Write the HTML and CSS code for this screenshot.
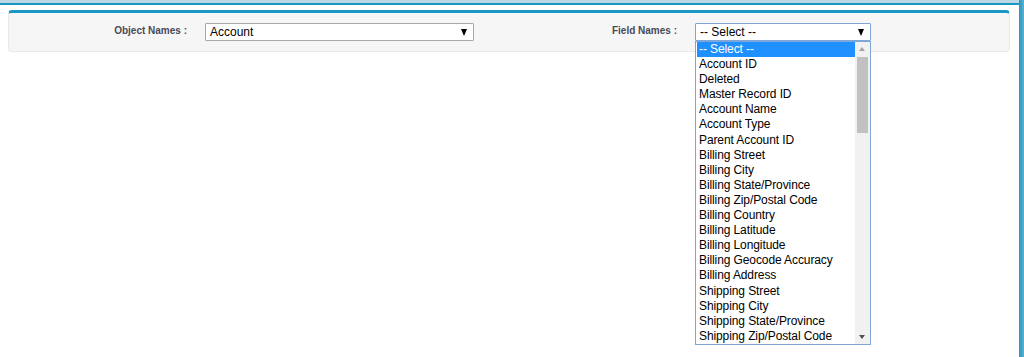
FILE: index.html
```html
<!DOCTYPE html>
<html>
<head>
<meta charset="utf-8">
<link rel="stylesheet" href="styles.css">
</head>
<body>
<div class="page">
  <div class="main">
    <div class="topstrip"></div>
    <div class="panel">
      <div class="row">
        <div class="label label-obj">Object Names :</div>
        <div class="select select-obj">
          <span class="sel-text">Account</span>
          <span class="arrow"></span>
        </div>
        <div class="label label-field">Field Names :</div>
        <div class="select select-field">
          <span class="sel-text">-- Select --</span>
          <span class="arrow"></span>
          <div class="dropdown">
            <ul class="options">
              <li class="opt active">-- Select --</li>
              <li class="opt">Account ID</li>
              <li class="opt">Deleted</li>
              <li class="opt">Master Record ID</li>
              <li class="opt">Account Name</li>
              <li class="opt">Account Type</li>
              <li class="opt">Parent Account ID</li>
              <li class="opt">Billing Street</li>
              <li class="opt">Billing City</li>
              <li class="opt">Billing State/Province</li>
              <li class="opt">Billing Zip/Postal Code</li>
              <li class="opt">Billing Country</li>
              <li class="opt">Billing Latitude</li>
              <li class="opt">Billing Longitude</li>
              <li class="opt">Billing Geocode Accuracy</li>
              <li class="opt">Billing Address</li>
              <li class="opt">Shipping Street</li>
              <li class="opt">Shipping City</li>
              <li class="opt">Shipping State/Province</li>
              <li class="opt">Shipping Zip/Postal Code</li>
            </ul>
            <div class="scrollbar">
              <div class="sb-up"></div>
              <div class="sb-track"><div class="sb-thumb"></div></div>
              <div class="sb-down"></div>
            </div>
          </div>
        </div>
      </div>
    </div>
  </div>
  <div class="edge"></div>
</div>
</body>
</html>
```

FILE: styles.css
```css
html, body {
  margin: 0;
  padding: 0;
  background: #ffffff;
  font-family: "Liberation Sans", Arial, sans-serif;
}

.page {
  display: flex;
  width: 1024px;
  height: 357px;
  overflow: hidden;
}

.main {
  flex: 1;
  display: flex;
  flex-direction: column;
}

.edge {
  width: 5px;
  background: linear-gradient(to right, #2a95bb, #5bb0cf);
}

.topstrip {
  height: 3px;
  background: #bcd8e4;
  border-bottom: 2px solid #1a98c4;
}

.panel {
  margin: 5px 9px 0 8px;
  height: 38px;
  background: #f6f6f6;
  border: 1px solid #e9e9e9;
  border-top: 3px solid #1a98c4;
  border-radius: 4px;
}

.row {
  display: flex;
  align-items: flex-start;
  padding-top: 10px;
}

.label {
  font-size: 10px;
  font-weight: bold;
  color: #4a4a56;
  text-align: right;
  padding-top: 2px;
  line-height: 12px;
}

.label-obj {
  width: 178px;
  margin-right: 18px;
}

.label-field {
  width: 203px;
  margin-right: 18px;
}

.select {
  position: relative;
  height: 16px;
  background: #ffffff;
  border: 1px solid #a9a9a9;
  border-radius: 1px;
  display: flex;
  align-items: center;
  font-size: 12px;
  color: #000000;
}

.select-obj {
  width: 267px;
}

.select-field {
  width: 174px;
  border-color: #7ea6d6;
}

.sel-text {
  padding-left: 4px;
  line-height: 16px;
}

.arrow {
  position: absolute;
  right: 6px;
  top: 5px;
  width: 0;
  height: 0;
  border-left: 3.5px solid transparent;
  border-right: 3.5px solid transparent;
  border-top: 7px solid #000000;
}

.dropdown {
  position: absolute;
  left: -1px;
  top: 17px;
  width: 174px;
  height: 302px;
  background: #ffffff;
  border: 1px solid #7ea6d6;
  display: flex;
  z-index: 5;
}

.options {
  list-style: none;
  margin: 0;
  padding: 0;
  flex: 1;
  overflow: hidden;
}

.opt {
  height: 15.1px;
  line-height: 15px;
  padding-left: 3px;
  font-size: 12px;
  letter-spacing: -0.1px;
  color: #000000;
  white-space: nowrap;
}

.opt.active {
  background: #1e90ff;
  color: #ffffff;
  margin-left: 1px;
  padding-left: 2px;
}

.scrollbar {
  width: 15px;
  background: #f1f1f1;
  display: flex;
  flex-direction: column;
}

.sb-up, .sb-down {
  height: 15px;
  position: relative;
}

.sb-up::after {
  content: "";
  position: absolute;
  left: 4px;
  top: 5px;
  border-left: 3.5px solid transparent;
  border-right: 3.5px solid transparent;
  border-bottom: 4px solid #a3a3a3;
}

.sb-down::after {
  content: "";
  position: absolute;
  left: 4px;
  top: 6px;
  border-left: 3.5px solid transparent;
  border-right: 3.5px solid transparent;
  border-top: 4px solid #505050;
}

.sb-track {
  flex: 1;
  padding: 0 2px;
}

.sb-thumb {
  height: 76px;
  background: #c1c1c1;
}
```
